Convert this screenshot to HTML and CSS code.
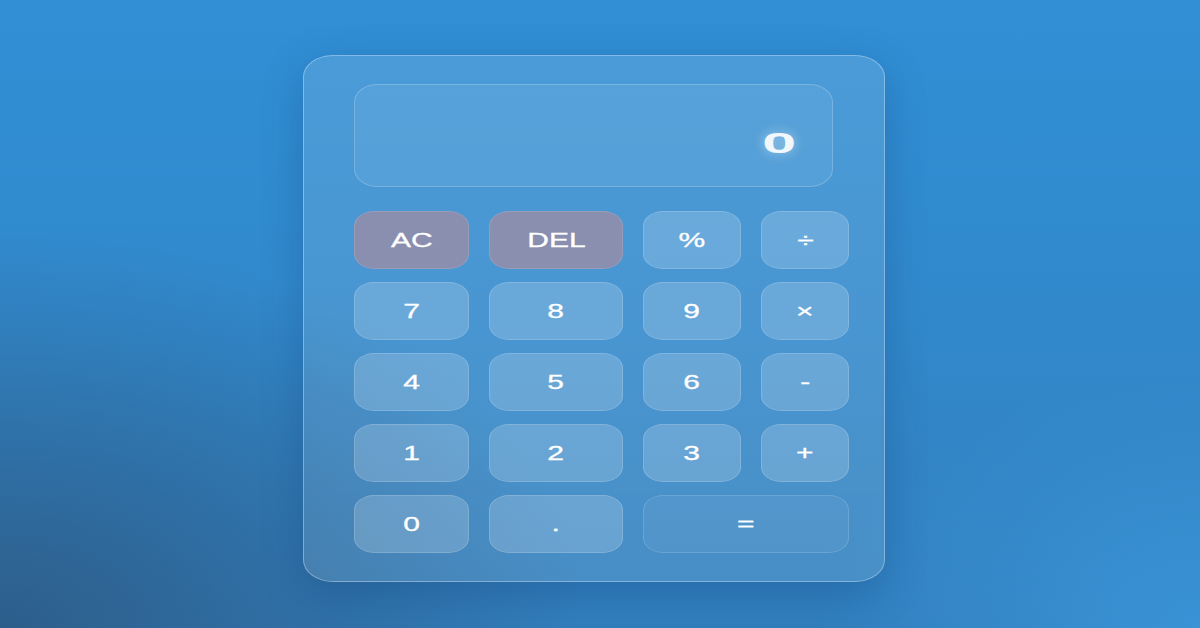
FILE: index.html
```html
<!DOCTYPE html>
<html lang="en">
<head>
<meta charset="utf-8">
<title>Calculator</title>
<link rel="stylesheet" href="styles.css">
</head>
<body>
<main class="page">
  <section class="calc">
    <div class="display"><span class="display-value">0</span></div>
    <div class="keys">
      <button class="key key-fn"><span class="lbl">AC</span></button>
      <button class="key key-fn"><span class="lbl">DEL</span></button>
      <button class="key"><span class="lbl">%</span></button>
      <button class="key"><span class="lbl">÷</span></button>
      <button class="key"><span class="lbl">7</span></button>
      <button class="key"><span class="lbl">8</span></button>
      <button class="key"><span class="lbl">9</span></button>
      <button class="key"><span class="lbl">×</span></button>
      <button class="key"><span class="lbl">4</span></button>
      <button class="key"><span class="lbl">5</span></button>
      <button class="key"><span class="lbl">6</span></button>
      <button class="key"><span class="lbl">-</span></button>
      <button class="key"><span class="lbl">1</span></button>
      <button class="key"><span class="lbl">2</span></button>
      <button class="key"><span class="lbl">3</span></button>
      <button class="key"><span class="lbl">+</span></button>
      <button class="key"><span class="lbl">0</span></button>
      <button class="key"><span class="lbl">.</span></button>
      <button class="key key-eq"><span class="lbl">=</span></button>
    </div>
  </section>
</main>
</body>
</html>
```
FILE: styles.css
```css
html, body {
  margin: 0;
  padding: 0;
  width: 1200px;
  height: 628px;
  overflow: hidden;
}
body {
  font-family: "Liberation Sans", Arial, sans-serif;
  background:
    radial-gradient(ellipse 70% 90% at 0% 100%, rgba(44, 88, 130, 0.85), rgba(44, 88, 130, 0) 70%),
    radial-gradient(ellipse 40% 50% at 100% 100%, rgba(62, 160, 230, 0.6), rgba(62, 160, 230, 0) 80%),
    linear-gradient(180deg, #318fd5 0%, #3189cc 50%, #327fbd 100%);
}
.page {
  box-sizing: border-box;
  width: 1200px;
  height: 628px;
  padding: 55px 0 0 303px;
  display: flex;
  align-items: flex-start;
}
.calc {
  box-sizing: border-box;
  width: 582px;
  padding: 28px 34px 28px 50px;
  border-radius: 30px / 22px;
  border: 1px solid rgba(255, 255, 255, 0.32);
  background: linear-gradient(180deg, rgba(255, 255, 255, 0.12) 0%, rgba(255, 255, 255, 0.11) 100%);
  box-shadow: 0 12px 40px rgba(10, 50, 110, 0.28);
  display: flex;
  flex-direction: column;
  gap: 24px;
}
.display {
  box-sizing: border-box;
  width: 479px;
  height: 103px;
  border-radius: 24px / 18px;
  border: 1px solid rgba(255, 255, 255, 0.2);
  background: rgba(255, 255, 255, 0.07);
  display: flex;
  align-items: center;
  justify-content: flex-end;
  padding: 16px 36px 0 0;
}
.display-value {
  font-family: "Liberation Sans", Arial, sans-serif;
  font-weight: bold;
  font-size: 29px;
  line-height: 1;
  color: #f2f7fc;
  text-shadow: 0 0 8px rgba(255, 255, 255, 0.5);
  display: inline-block;
  transform: scaleX(2.1);
  transform-origin: right center;
}
.keys {
  display: grid;
  grid-template-columns: 115px 134px 98px 88px;
  grid-auto-rows: 58px;
  column-gap: 20px;
  row-gap: 13px;
}
.key {
  box-sizing: border-box;
  margin: 0;
  padding: 0;
  border: 1px solid rgba(255, 255, 255, 0.16);
  border-radius: 20px / 15px;
  background: rgba(255, 255, 255, 0.18);
  color: #ffffff;
  font-family: "Liberation Sans", Arial, sans-serif;
  font-size: 20px;
  display: flex;
  align-items: center;
  justify-content: center;
}
.lbl {
  display: inline-block;
  transform: scaleX(1.5);
  line-height: 1;
  -webkit-text-stroke: 0.3px #ffffff;
}
.key-fn {
  background: #8a8fb0;
  border-color: rgba(255, 255, 255, 0.12);
}
.key-eq {
  grid-column: 3 / span 2;
  background: rgba(255, 255, 255, 0.06);
  border-color: rgba(255, 255, 255, 0.14);
}
```
